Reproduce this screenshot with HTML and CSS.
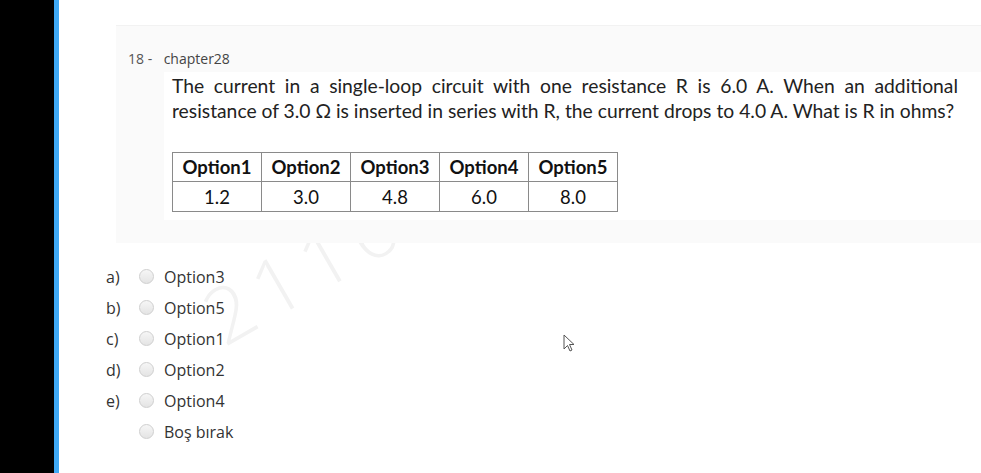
FILE: index.html
```html
<!DOCTYPE html>
<html lang="tr">
  <head>
    <meta charset="UTF-8" />
    <title>Soru 18</title>
    <link rel="stylesheet" href="styles.css">
  </head>
  <body>
    <div class="sidebar"></div>
    <div class="strip"></div>
    <div class="main">
      <div class="watermark">2116</div>
      <div class="question">
        <div class="q-head"><span class="q-no">18 -</span> <span class="q-title">chapter28</span></div>
        <div class="q-body">
          <p class="q-text">The current in a single-loop circuit with one resistance R is 6.0 A. When an additional resistance of 3.0 &Omega; is inserted in series with R, the current drops to 4.0 A. What is R in ohms?</p>
          <table class="opts">
            <tr><th>Option1</th><th>Option2</th><th>Option3</th><th>Option4</th><th>Option5</th></tr>
            <tr><td>1.2</td><td>3.0</td><td>4.8</td><td>6.0</td><td>8.0</td></tr>
          </table>
        </div>
      </div>

      <ul class="answers">
        <li><span class="letter">a)</span><span class="radio"></span><span class="lbl">Option3</span></li>
        <li><span class="letter">b)</span><span class="radio"></span><span class="lbl">Option5</span></li>
        <li><span class="letter">c)</span><span class="radio"></span><span class="lbl">Option1</span></li>
        <li><span class="letter">d)</span><span class="radio"></span><span class="lbl">Option2</span></li>
        <li><span class="letter">e)</span><span class="radio"></span><span class="lbl">Option4</span></li>
        <li><span class="letter"></span><span class="radio"></span><span class="lbl">Boş bırak</span></li>
      </ul>
    </div>

    <svg class="cursor" width="14" height="20" viewBox="0 0 14 20">
      <path d="M1 1 L1 15 L4.5 11.5 L7 17 L9 16 L6.5 10.5 L11 10.5 Z" fill="#fff" stroke="#555" stroke-width="1"/>
    </svg>
  </body>
</html>
```

FILE: styles.css
```css
body {
  margin: 0;
  display: flex;
  height: 100vh;
  overflow: hidden;
  background: #fff;
  font-family: "Open Sans", sans-serif;
  color: #333;
}
.sidebar {
  width: 54px;
  background: #000;
  flex-shrink: 0;
}
.strip {
  width: 5px;
  background: #3fa9f5;
  flex-shrink: 0;
}
.main {
  flex: 1;
  padding: 25px 0 0 47px;
  position: relative;
}
.watermark {
  position: absolute;
  left: 168px;
  top: 282px;
  font-size: 78px;
  line-height: 70px;
  letter-spacing: 10px;
  color: #f2f2f2;
  font-weight: 300;
  transform: rotate(-30deg);
  transform-origin: left bottom;
  z-index: 0;
}
.question {
  position: relative;
  z-index: 1;
  margin-left: 10px;
  background: #fafafa;
  border-top: 1px solid #f2f2f2;
  padding: 23px 0 23px 0;
}
.q-head {
  font-size: 14px;
  line-height: 20px;
  padding-left: 12px;
  color: #444;
}
.q-no {
  display: inline-block;
  width: 32px;
  color: #555;
}
.q-body {
  background: #fff;
  margin: 3px 0 0 48px;
  padding: 1px 0 8px 8px;
}
.q-text {
  margin: 0;
  width: 786px;
  text-align: justify;
  font-family: Lato, sans-serif;
  font-size: 19.3px;
  line-height: 25px;
  color: #222;
}
.opts {
  margin-top: 29px;
  border-collapse: collapse;
  font-family: Lato, sans-serif;
  font-size: 18.5px;
  color: #111;
}
.opts th, .opts td {
  border: 1px solid #8a8a8a;
  width: 88px;
  text-align: center;
  padding: 0;
}
.opts th {
  height: 28px;
  font-weight: bold;
}
.opts td {
  height: 29px;
  font-weight: normal;
}
.answers {
  position: relative;
  z-index: 1;
  list-style: none;
  margin: 18px 0 0 0;
  padding: 0;
  font-size: 16px;
}
.answers li {
  display: flex;
  align-items: center;
  height: 31px;
}
.letter {
  width: 33px;
  color: #333;
}
.radio {
  width: 13px;
  height: 13px;
  border: 1px solid #cfcfcf;
  border-radius: 50%;
  background: linear-gradient(#f6f6f6, #e4e4e4);
  margin-right: 10px;
}
.lbl {
  color: #333;
}
.cursor {
  position: absolute;
  left: 563px;
  top: 334px;
}
```
